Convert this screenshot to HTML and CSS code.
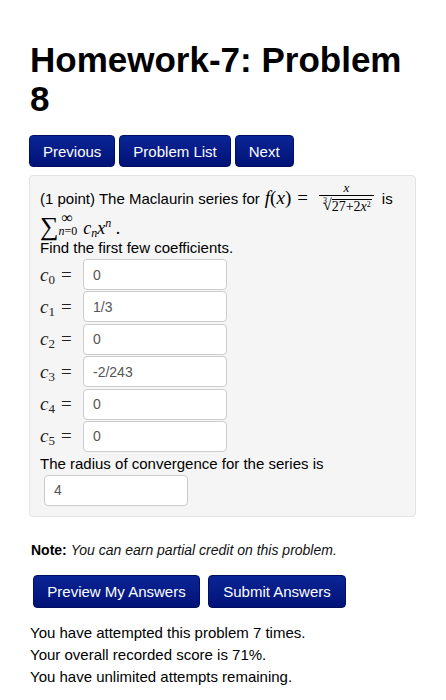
FILE: index.html
```html
<!DOCTYPE html>
<html>
<head>
<meta charset="utf-8">
<link rel="stylesheet" href="styles.css">
</head>
<body>
<div class="page">
  <h1 class="title">Homework-7: Problem 8</h1>
  <div class="nav">
    <span class="btn">Previous</span>
    <span class="btn">Problem List</span>
    <span class="btn">Next</span>
  </div>
  <div class="problem">
    <div class="line1"><span class="txt">(1 point) The Maclaurin series for</span><span class="m fx"><i>f</i>(<i>x</i>)<span class="eq">=</span></span><span class="frac"><span class="num"><i>x</i></span><span class="den"><span class="idx">3</span><span class="rad">√</span><span class="radicand">27+2<i>x</i><sup>2</sup></span></span></span><span class="txt">is</span></div>
    <div class="line2"><span class="sum"><span class="sigma">∑</span><span class="limits"><span class="up">∞</span><span class="lo"><i>n</i>=0</span></span></span><span class="m term"><i>c</i><sub><i>n</i></sub><i>x</i><sup><i>n</i></sup> .</span></div>
    <div class="line3">Find the first few coefficients.</div>
    <div class="rows">
      <div class="row"><span class="lab m"><i>c</i><sub>0</sub><span class="eq">=</span></span><span class="inp">0</span></div>
      <div class="row"><span class="lab m"><i>c</i><sub>1</sub><span class="eq">=</span></span><span class="inp">1/3</span></div>
      <div class="row"><span class="lab m"><i>c</i><sub>2</sub><span class="eq">=</span></span><span class="inp">0</span></div>
      <div class="row"><span class="lab m"><i>c</i><sub>3</sub><span class="eq">=</span></span><span class="inp">-2/243</span></div>
      <div class="row"><span class="lab m"><i>c</i><sub>4</sub><span class="eq">=</span></span><span class="inp">0</span></div>
      <div class="row"><span class="lab m"><i>c</i><sub>5</sub><span class="eq">=</span></span><span class="inp">0</span></div>
    </div>
    <div class="radius">The radius of convergence for the series is</div>
    <span class="inp inp-r">4</span>
  </div>
  <p class="note"><b>Note:</b> <i>You can earn partial credit on this problem.</i></p>
  <div class="actions">
    <span class="btn btn-lg">Preview My Answers</span>
    <span class="btn btn-lg">Submit Answers</span>
  </div>
  <div class="status">
    <div>You have attempted this problem 7 times.</div>
    <div>Your overall recorded score is 71%.</div>
    <div>You have unlimited attempts remaining.</div>
  </div>
</div>
</body>
</html>
```
FILE: styles.css
```css
html, body { margin: 0; padding: 0; background: #fff; }
body { font-family: "Liberation Sans", Arial, sans-serif; color: #000; }
.page { padding: 0 30px 0 30px; }
.title { font-size: 35px; font-weight: bold; line-height: 39px; margin: 0; padding-top: 40px; width: 380px; }
.nav { display: flex; gap: 4px; margin-top: 17px; margin-left: -1px; }
.btn { display: inline-flex; align-items: center; justify-content: center; height: 32px; padding: 0 13px; box-sizing: border-box; border-radius: 4px; background: linear-gradient(#0b2596, #001277); color: #fff; font-size: 15px; border: 1px solid #00105e; }
.problem { margin-top: 8px; margin-left: -1px; width: 387px; box-sizing: border-box; background: #f5f5f5; border: 1px solid #e3e3e3; border-radius: 4px; padding: 6px 10px 10px 10px; font-size: 15px; }
.m { font-family: "Liberation Serif", "Times New Roman", serif; }
.line1 { display: flex; align-items: center; white-space: nowrap; height: 32px; }
.fx { font-size: 19px; margin-left: 5px; }
.fx .eq { margin: 0 0 0 6px; }
.frac { display: inline-flex; flex-direction: column; align-items: center; font-family: "Liberation Serif", serif; margin: 0 8px 0 11px; padding-bottom: 2px; }
.num { padding: 0 2px 1px; line-height: 13px; font-size: 13px; }
.den { border-top: 1px solid #000; display: inline-flex; align-items: flex-start; line-height: 15px; padding: 1px 2px 0 4px; }
.idx { font-size: 8px; line-height: 8px; margin-right: -4px; margin-top: 0; }
.rad { font-size: 16px; line-height: 15px; }
.radicand { border-top: 1px solid #000; margin-top: 2px; line-height: 13px; font-size: 14px; padding-right: 1px; }
.radicand sup { font-size: 8px; vertical-align: 4px; line-height: 0; }
.line2 { height: 25px; display: flex; align-items: center; }
.sum { display: inline-flex; align-items: center; margin-right: 6px; font-family: "Liberation Serif", serif; }
.sigma { font-size: 26px; line-height: 20px; }
.limits { display: inline-flex; flex-direction: column; font-size: 12px; line-height: 10px; margin-left: 0; }
.up { font-size: 16px; line-height: 10px; margin-left: 3px; margin-top: -4px; }
.lo { margin-top: 3px; }
.term { font-size: 18px; line-height: 20px; margin-top: 2px; }
.term sub { font-size: 12px; vertical-align: -3px; line-height: 0; }
.term sup { font-size: 12px; vertical-align: 7px; line-height: 0; }
.line3 { line-height: 18px; }
.rows { display: flex; flex-direction: column; gap: 1.4px; margin-top: 2px; }
.row { display: flex; align-items: center; }
.lab { width: 43px; font-size: 19px; line-height: 20px; color: #222; }
.lab sub { font-size: 13px; vertical-align: -3px; line-height: 0; }
.lab .eq { margin-left: 6px; }
.inp { display: flex; align-items: center; width: 144px; height: 31px; box-sizing: border-box; background: #fff; border: 1px solid #ccc; border-radius: 4px; padding-left: 9px; font-size: 14px; color: #555; }
.radius { margin-top: 2px; line-height: 20px; }
.inp-r { margin-left: 4px; margin-top: 1px; }
.note { margin: 24px 0 0 1px; font-size: 14px; line-height: 18px; }
.note i { color: #111; }
.actions { display: flex; gap: 8px; margin-top: 16px; margin-left: 3px; }
.btn-lg { padding: 0 13px; height: 33px; }
.btn-lg:first-child { width: 167px; }
.btn-lg:last-child { width: 138px; }
.status { margin-top: 14px; font-size: 15px; line-height: 22px; }
```
